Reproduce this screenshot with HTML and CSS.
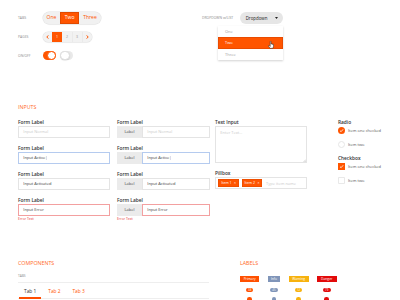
FILE: index.html
```html
<!DOCTYPE html>
<html>
<head>
<meta charset="utf-8">
<link rel="stylesheet" href="styles.css">
</head>
<body>
<div class="page">
  <section class="top">
    <div class="controls">
      <div class="ctl-row r1">
        <span class="cap">TABS</span>
        <div class="seg"><span class="s1">One</span><span class="s2 on">Two</span><span class="s3">Three</span></div>
      </div>
      <div class="ctl-row r2">
        <span class="cap">PAGES</span>
        <div class="pager">
          <span class="pg a1"><svg width="3" height="4" viewBox="0 0 3 4"><path d="M2.3 0.4 L0.8 2 L2.3 3.6" fill="none" stroke="#ff5500" stroke-width="1"/></svg></span>
          <span class="pg cur">1</span>
          <span class="pg">2</span>
          <span class="pg dv">3</span>
          <span class="pg a2 dv"><svg width="3" height="4" viewBox="0 0 3 4"><path d="M0.7 0.4 L2.2 2 L0.7 3.6" fill="none" stroke="#ff5500" stroke-width="1"/></svg></span>
        </div>
      </div>
      <div class="ctl-row r3">
        <span class="cap">ON/OFF</span>
        <div class="toggles">
          <span class="tog on"><span class="knob"></span></span>
          <span class="tog off"><span class="knob"></span></span>
        </div>
      </div>
    </div>
    <div class="dd-area">
      <span class="cap dd-cap">DROPDOWN w/LIST</span>
      <div class="dd">
        <span class="dd-text">Dropdown</span>
        <svg class="caret" width="3" height="2" viewBox="0 0 3 2"><path d="M0 0 H3 L1.5 2 Z" fill="#222"/></svg>
        <ul class="menu">
          <li>One</li>
          <li class="sel">Two
            <svg class="hand" width="7" height="8" viewBox="0 0 7 8"><path d="M2.2 0.6 C2.2 0 3.1 0 3.1 0.6 V3 C3.1 2.5 3.9 2.5 3.9 3 V3.3 C3.9 2.8 4.7 2.8 4.7 3.3 V3.6 C4.7 3.1 5.5 3.1 5.5 3.6 V5.3 L4.9 7.3 H2.1 L0.6 5.2 C0.2 4.6 0.9 4.1 1.4 4.6 L2.2 5.4 Z" fill="#fff" stroke="#222" stroke-width="0.5" stroke-linejoin="round"/></svg>
          </li>
          <li>Three</li>
        </ul>
      </div>
    </div>
  </section>

  <section class="inputs">
    <h2 class="sec-title">INPUTS</h2>
    <div class="form-grid">
      <div class="col c1">
        <div class="field"><div class="flabel">Form Label</div><div class="box ph">Input Normal</div></div>
        <div class="field"><div class="flabel">Form Label</div><div class="box active">Input Active<span class="caretline">|</span></div></div>
        <div class="field"><div class="flabel">Form Label</div><div class="box">Input Activated</div></div>
        <div class="field last"><div class="flabel">Form Label</div><div class="box error">Input Error</div><div class="err">Error Text</div></div>
      </div>
      <div class="col c2">
        <div class="field"><div class="flabel">Form Label</div><div class="group"><span class="addon">Label</span><div class="box ph">Input Normal</div></div></div>
        <div class="field"><div class="flabel">Form Label</div><div class="group"><span class="addon">Label</span><div class="box active">Input Active<span class="caretline">|</span></div></div></div>
        <div class="field"><div class="flabel">Form Label</div><div class="group"><span class="addon">Label</span><div class="box">Input Activated</div></div></div>
        <div class="field last"><div class="flabel">Form Label</div><div class="group"><span class="addon">Label</span><div class="box error">Input Error</div></div><div class="err">Error Text</div></div>
      </div>
      <div class="col c3">
        <div class="field"><div class="flabel">Text Input</div>
          <div class="ta">Enter Text...
            <svg class="grip" width="3" height="3" viewBox="0 0 3 3"><path d="M0.5 3 L3 0.5 M1.8 3 L3 1.8" stroke="#999" stroke-width="0.4"/></svg>
          </div>
        </div>
        <div class="field last"><div class="flabel">Pillbox</div>
          <div class="pillbox"><span class="pill">Item 1 <b>×</b></span><span class="pill">Item 2 <b>×</b></span><span class="pb-ph">Type item name</span></div>
        </div>
      </div>
      <div class="col c4">
        <div class="flabel">Radio</div>
        <div class="opt o1"><svg width="7" height="7" viewBox="0 0 7 7"><circle cx="3.5" cy="3.5" r="3.5" fill="#ff5500"/><path d="M2 3.7 L3.1 4.7 L5.1 2.3" fill="none" stroke="#fff" stroke-width="0.8"/></svg><span>Item one checked</span></div>
        <div class="opt o2"><svg width="7" height="7" viewBox="0 0 7 7"><circle cx="3.5" cy="3.5" r="3" fill="#fff" stroke="#e0e0e0" stroke-width="0.8"/></svg><span>Item two</span></div>
        <div class="flabel cb-label">Checkbox</div>
        <div class="opt o3"><svg width="7" height="7" viewBox="0 0 7 7"><rect width="7" height="7" fill="#ff5500"/><path d="M2 3.7 L3.1 4.7 L5.1 2.3" fill="none" stroke="#fff" stroke-width="0.8"/></svg><span>Item one checked</span></div>
        <div class="opt o4"><svg width="7" height="7" viewBox="0 0 7 7"><rect x="0.4" y="0.4" width="6.2" height="6.2" rx="0.6" fill="#fff" stroke="#e0e0e0" stroke-width="0.8"/></svg><span>Item two</span></div>
      </div>
    </div>
  </section>

  <section class="components">
    <div class="comp-left">
      <h2 class="sec-title">COMPONENTS</h2>
      <div class="cap sub-cap">TABS</div>
      <div class="tabs"><span class="tab active">Tab 1</span><span class="tab">Tab 2</span><span class="tab">Tab 3</span></div>
    </div>
    <div class="comp-right">
      <h2 class="sec-title">LABELS</h2>
      <div class="lbl-grid">
        <span class="lbl primary">Primary</span>
        <span class="lbl info">Info</span>
        <span class="lbl warning">Warning</span>
        <span class="lbl danger">Danger</span>
        <span class="badge primary">38</span>
        <span class="badge info">45</span>
        <span class="badge warning">12</span>
        <span class="badge danger">79</span>
        <span class="dot primary"></span>
        <span class="dot info"></span>
        <span class="dot warning"></span>
        <span class="dot danger"></span>
      </div>
    </div>
  </section>
</div>
</body>
</html>
```

FILE: styles.css
```css
* { box-sizing: border-box; margin: 0; padding: 0; }
html, body { width: 400px; height: 300px; overflow: hidden; background: #fff; }
body { font-family: "Open Sans", "Liberation Sans", sans-serif; color: #333; font-size: 4px; }
.page { padding-left: 18px; }

/* top controls */
.top { display: flex; padding-top: 12px; height: 60.5px; }
.controls { width: 184px; display: flex; flex-direction: column; }
.ctl-row { display: flex; align-items: center; }
.cap { font-size: 3.4px; color: #8c8c8c; width: 25px; flex: none; white-space: nowrap; }
.r1 { height: 11.5px; }
.r2 { height: 10px; margin-top: 8.2px; }
.r3 { height: 9.5px; margin-top: 9.3px; }

.seg { display: flex; height: 11.5px; background: #f1f1f1; border-radius: 6px; box-shadow: 0 0 0 0.5px #e2e2e2, 0 0.5px 1px rgba(0,0,0,0.08); overflow: hidden; }
.seg span { font-size: 5px; color: #ff5500; line-height: 11.5px; text-align: center; }
.seg .s1 { width: 17px; }
.seg .s2 { width: 19.3px; }
.seg .s3 { width: 21.4px; }
.seg .on { background: #ff5500; color: #fff; box-shadow: inset 0 0 0 1px #e04a00; }

.pager { display: flex; height: 10px; background: #f2f2f2; border-radius: 5px; box-shadow: 0 0 0 0.5px #e4e4e4, 0 0.5px 1px rgba(0,0,0,0.08); overflow: hidden; }
.pg { width: 10px; display: flex; align-items: center; justify-content: center; font-size: 3.6px; color: #9a9a9a; }
.pg.a1 { width: 9px; }
.pg.a2 { width: 10.4px; }
.pg.dv { box-shadow: inset 0.5px 0 0 #e2e2e2; }
.pg.cur { background: #ff5500; color: #fff; }

.toggles { display: flex; gap: 4px; }
.tog { width: 13px; height: 9.5px; border-radius: 5px; display: flex; align-items: center; }
.tog.on { background: #ff5500; justify-content: flex-end; }
.tog.off { background: #e9e9e9; justify-content: flex-start; }
.knob { width: 9.5px; height: 9.5px; border-radius: 50%; background: #fff; }
.tog.on .knob { border: 1px solid #ff5500; }
.tog.off .knob { border: 0.8px solid #dedede; box-shadow: 0 0.5px 1px rgba(0,0,0,0.15); }

.dd-area { display: flex; align-items: center; height: 11.5px; }
.dd-cap { width: 38px; }
.dd { position: relative; width: 43.3px; height: 11.6px; background: #e6e6e6; border-radius: 6px; display: flex; align-items: center; padding: 0 5px 0 5.7px; justify-content: space-between; }
.dd-text { font-size: 4.4px; color: #222; }
.menu { position: absolute; left: -22.3px; top: 14px; width: 65.6px; list-style: none; background: #fff; box-shadow: 0 0.5px 2px rgba(0,0,0,0.18); }
.menu li { position: relative; height: 11.3px; line-height: 11.3px; padding-left: 7.3px; font-size: 4px; color: #a0a0a0; }
.menu li.sel { background: #ff5500; color: #fff; box-shadow: inset 0 0 0 0.7px #e24800; }
.hand { position: absolute; left: 50px; top: 3.5px; }

/* inputs */
.sec-title { font-size: 5.3px; font-weight: 400; color: #ff6a1f; line-height: 8px; height: 8px; }
.inputs .sec-title { margin-top: 42.5px; }
.form-grid { display: flex; margin-top: 8px; }
.col { flex: none; }
.c1 { width: 92.4px; }
.c2 { width: 93px; margin-left: 6.6px; }
.c3 { width: 92.5px; margin-left: 5px; }
.c4 { margin-left: 30.5px; }

.field { margin-bottom: 7px; }
.field.last { margin-bottom: 0; }
.flabel { font-size: 4.8px; font-weight: 600; color: #333; line-height: 6px; height: 6px; margin-bottom: 1px; white-space: nowrap; }
.box { height: 12px; border: 1px solid #e4e4e4; padding: 0 4.3px; font-size: 4px; line-height: 10px; color: #3a3a3a; white-space: nowrap; flex: 1; }
.box.ph { color: #cacaca; }
.box.active { border-color: #b5cbef; }
.box.error { border-color: #f3a0a0; }
.caretline { font-weight: 300; color: #222; }
.err { font-size: 3.4px; color: #e83030; line-height: 6px; }
.group { display: flex; height: 12px; }
.addon { width: 25px; flex: none; background: #ebebeb; text-align: center; font-size: 4px; line-height: 12px; color: #444; }

.ta { position: relative; height: 37px; border: 1px solid #e4e4e4; padding: 3px 4.3px; font-size: 4px; color: #cacaca; line-height: 6px; }
.grip { position: absolute; right: 0.5px; bottom: 0.5px; }
.pillbox { height: 12px; border: 1px solid #e4e4e4; display: flex; align-items: center; padding-left: 2.3px; gap: 2.7px; }
.pill { height: 7.3px; width: 20.7px; background: #ff5500; color: #fff; font-size: 3.5px; line-height: 7.3px; text-align: center; box-shadow: inset 0 0 0 0.5px #e04a00; white-space: nowrap; }
.pill b { font-weight: 400; margin-left: 1.5px; }
.pb-ph { font-size: 4px; color: #cacaca; margin-left: 1px; white-space: nowrap; }

.opt { display: flex; align-items: center; height: 7px; gap: 3px; font-size: 4px; color: #555; white-space: nowrap; }
.opt svg { flex: none; }
.o1 { margin-top: 2px; }
.o2 { margin-top: 7px; }
.cb-label { margin-top: 6.5px; margin-bottom: 0; }
.o3 { margin-top: 2.5px; }
.o4 { margin-top: 6.5px; }

/* components */
.components { display: flex; margin-top: 36.7px; }
.comp-left { width: 191px; flex: none; }
.sub-cap { width: auto; font-size: 3.2px; line-height: 5px; margin-top: 7px; padding-bottom: 3px; border-bottom: 1px solid #eeeeee; }
.tabs { display: flex; border-bottom: 1px solid #eeeeee; padding-left: 1px; gap: 2px; }
.tab { font-size: 4.8px; line-height: 7px; padding: 5.5px 5px 1.8px; border-bottom: 2px solid transparent; margin-bottom: -1px; color: #ff5500; }
.tab.active { color: #333; border-bottom-color: #ff4d00; }

.comp-right { margin-left: 31px; }
.lbl-grid { display: grid; grid-template-columns: 19.3px 12.7px 20px 19.7px; column-gap: 8.3px; margin-top: 9px; }
.lbl { height: 6px; line-height: 6px; font-size: 3.3px; color: #fff; text-align: center; }
.badge { justify-self: center; margin-top: 6px; height: 4.6px; min-width: 7.6px; padding: 0 1.4px; border-radius: 2.3px; font-size: 2.8px; line-height: 4.6px; color: #fff; text-align: center; }
.dot { justify-self: center; margin-top: 5px; width: 4.5px; height: 4.5px; border-radius: 50%; }
.primary { background: #ff5000; }
.info { background: #8095b9; }
.warning { background: #f7b20e; }
.danger { background: #e20a0a; }
```
